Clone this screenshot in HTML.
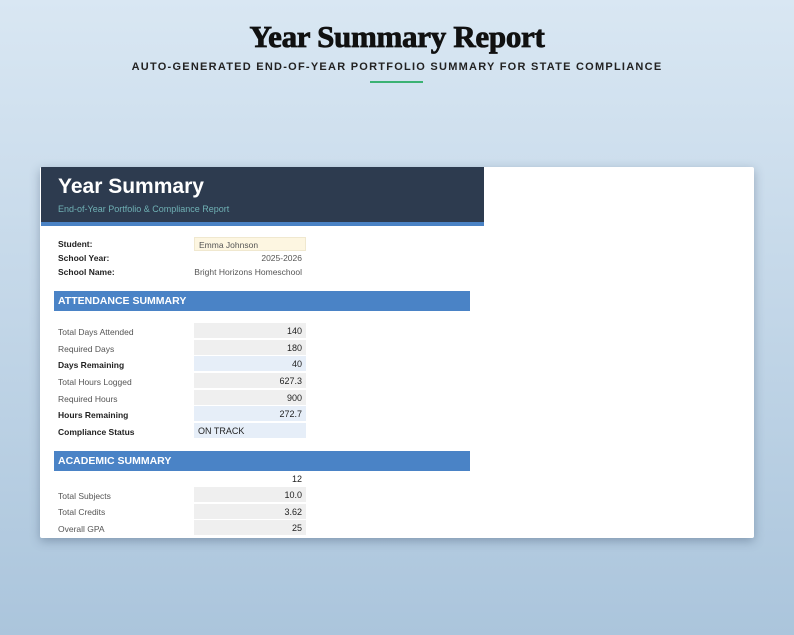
<!DOCTYPE html>
<html><head><style>
*{margin:0;padding:0;box-sizing:border-box}
body{width:794px;height:635px;overflow:hidden;background:linear-gradient(#d9e7f3,#abc5dc);font-family:"Liberation Sans",sans-serif;position:relative}
.t{position:absolute;left:0;width:794px;text-align:center;top:19px;font-family:"Liberation Serif",serif;font-weight:bold;font-size:31px;color:#111;letter-spacing:-0.3px;-webkit-text-stroke:0.8px #111}
.s{position:absolute;left:0;width:794px;text-align:center;top:61px;font-size:11px;font-weight:bold;letter-spacing:1.25px;color:#222}
.ln{position:absolute;left:370px;top:81px;width:53px;height:2px;background:#3bb273}
.card{position:absolute;left:40px;top:167px;width:714px;height:371px;background:#fff;box-shadow:0 3px 10px rgba(40,60,90,.35);overflow:hidden;border-radius:2px}
.hd{position:absolute;left:1px;top:0;width:443px;height:55px;background:#2d3b4f}
.hd h1{position:absolute;left:17px;top:8px;font-size:21px;color:#fff}
.hd p{position:absolute;left:17px;top:37px;font-size:9px;color:#6fb0b4}
.st{position:absolute;left:1px;top:55px;width:443px;height:4px;background:#4a82c4}
.a{position:absolute;font-size:8.5px;color:#555}
.b{font-weight:bold;color:#222}
.c{position:absolute;left:154px;width:112px;height:16px;font-size:9px;color:#222;text-align:right;padding-right:4px;line-height:16px;border-bottom:1px solid #fff}
.bar{position:absolute;left:14px;width:416px;height:20px;background:#4a83c6;color:#fff;font-weight:bold;font-size:10.5px;line-height:20px;padding-left:4px}
</style></head><body>
<div class="t">Year Summary Report</div>
<div class="s">AUTO-GENERATED END-OF-YEAR PORTFOLIO SUMMARY FOR STATE COMPLIANCE</div>
<div class="ln"></div>
<div class="card">
<div class="hd"><h1>Year Summary</h1><p>End-of-Year Portfolio &amp; Compliance Report</p></div>
<div class="st"></div>
<div class="a b" style="left:18px;top:72px">Student:</div>
<div class="a b" style="left:18px;top:86px">School Year:</div>
<div class="a b" style="left:18px;top:100px">School Name:</div>
<div class="c" style="top:70px;height:14px;line-height:14px;background:#fdf6e1;border:1px solid #f0e8cf;text-align:left;padding-left:4px;font-size:8.5px;color:#555">Emma Johnson</div>
<div class="c" style="top:84px;height:14px;line-height:14px;font-size:8.5px;color:#555">2025-2026</div>
<div class="c" style="top:98px;height:14px;line-height:14px;font-size:8.5px;color:#555">Bright Horizons Homeschool</div>
<div class="bar" style="top:124px">ATTENDANCE SUMMARY</div>
<div class="a" style="left:18px;top:160px">Total Days Attended</div>
<div class="a" style="left:18px;top:177px">Required Days</div>
<div class="a b" style="left:18px;top:193px">Days Remaining</div>
<div class="a" style="left:18px;top:210px">Total Hours Logged</div>
<div class="a" style="left:18px;top:227px">Required Hours</div>
<div class="a b" style="left:18px;top:243px">Hours Remaining</div>
<div class="a b" style="left:18px;top:260px">Compliance Status</div>
<div class="c" style="top:156px;background:#efefef">140</div>
<div class="c" style="top:173px;background:#efefef">180</div>
<div class="c" style="top:189px;background:#e6eef8">40</div>
<div class="c" style="top:206px;background:#efefef">627.3</div>
<div class="c" style="top:223px;background:#efefef">900</div>
<div class="c" style="top:239px;background:#e6eef8">272.7</div>
<div class="c" style="top:256px;background:#e6eef8;text-align:left;padding-left:4px">ON TRACK</div>
<div class="bar" style="top:284px">ACADEMIC SUMMARY</div>
<div class="c" style="top:304px">12</div>
<div class="a" style="left:18px;top:324px">Total Subjects</div>
<div class="a" style="left:18px;top:340px">Total Credits</div>
<div class="a" style="left:18px;top:357px">Overall GPA</div>
<div class="c" style="top:320px;background:#efefef">10.0</div>
<div class="c" style="top:337px;background:#efefef">3.62</div>
<div class="c" style="top:353px;background:#efefef">25</div>
</div>
</body></html>
